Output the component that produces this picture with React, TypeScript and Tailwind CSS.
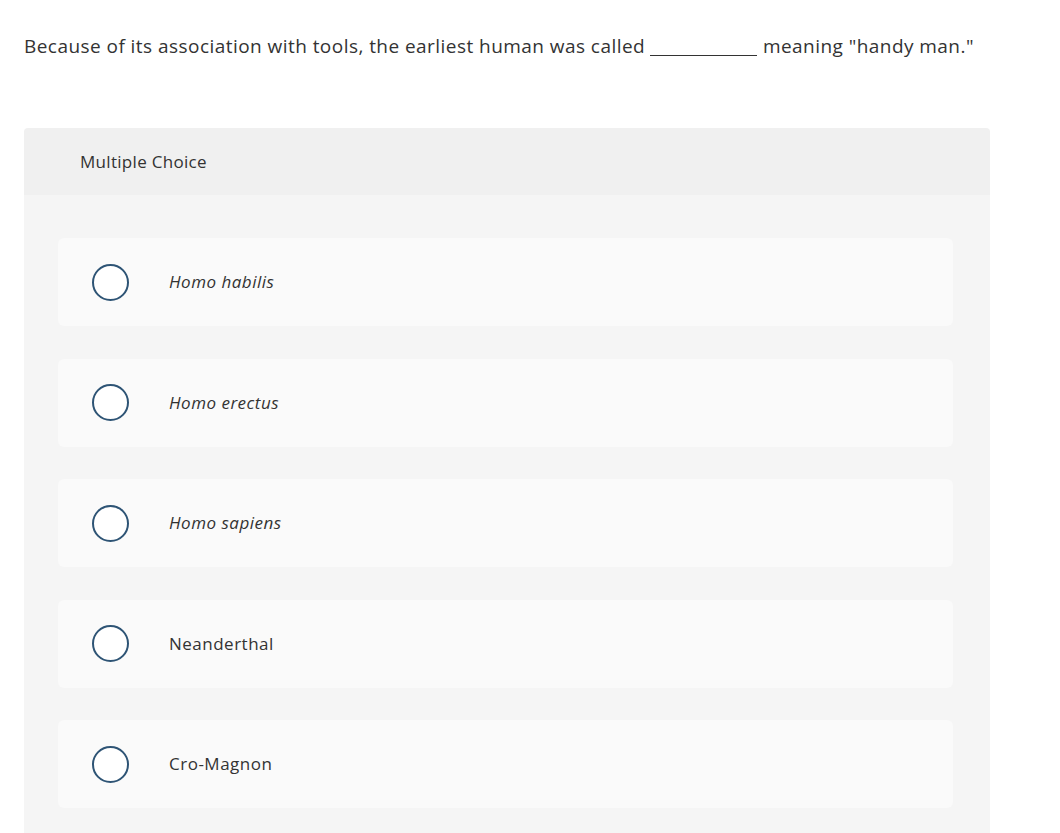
import React from "react";

const options = [
  { label: "Homo habilis", italic: true },
  { label: "Homo erectus", italic: true },
  { label: "Homo sapiens", italic: true },
  { label: "Neanderthal", italic: false },
  { label: "Cro-Magnon", italic: false },
];

export default function App() {
  return (
    <div
      className="min-h-[833px] bg-white text-[#2a2a2a]"
      style={{ fontFamily: "'Open Sans', sans-serif" }}
    >
      <div className="px-6 pt-[33px]">
        <p className="text-[19px] leading-[26px] tracking-[0.45px] text-[#333]">
          Because of its association with tools, the earliest human was called{" "}
          <span className="inline-block w-[107px] border-b border-[#333] align-baseline translate-y-[3px]"></span>{" "}
          meaning "handy man."
        </p>
      </div>
      <div className="ml-6 mt-[69px] w-[966px] rounded-t-[4px] overflow-hidden">
        <div className="h-[67px] bg-[#f0f0f0] flex items-center pl-14">
          <span className="text-[17px] tracking-[0.3px] text-[#333]">Multiple Choice</span>
        </div>
        <div className="bg-[#f5f5f5] pt-[43px] pl-[34px] pr-[37px] pb-10 flex flex-col gap-[32.5px]">
          {options.map((o) => (
            <div
              key={o.label}
              className="h-[88px] bg-[#fafafa] rounded-[6px] flex items-center pl-[34px]"
            >
              <div className="w-[37px] h-[37px] rounded-full border-2 border-[#2e5475] bg-white shrink-0"></div>
              <span
                className={`ml-[40px] text-[17px] tracking-[0.5px] text-[#333] ${o.italic ? "italic" : ""}`}
              >
                {o.label}
              </span>
            </div>
          ))}
        </div>
      </div>
    </div>
  );
}
